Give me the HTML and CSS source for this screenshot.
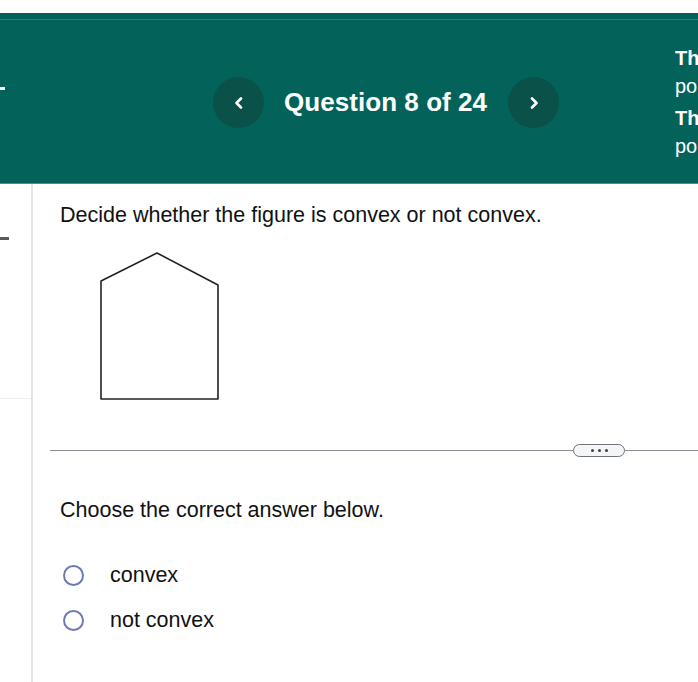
FILE: index.html
```html
<!DOCTYPE html>
<html>
<head>
<meta charset="utf-8">
<link rel="stylesheet" href="styles.css">
</head>
<body>
<div class="topstrip"></div>
<header class="header">
  <div class="hline"></div>
  <div class="hbody">
    <div class="hminus"></div>
    <nav class="nav">
      <button class="navbtn" aria-label="Previous">
        <svg width="10" height="12" viewBox="0 0 10 12"><polyline points="7,1.5 2.5,6 7,10.5" fill="none" stroke="#fff" stroke-width="2.6" stroke-linecap="round" stroke-linejoin="round"/></svg>
      </button>
      <h1 class="qtitle">Question 8 of 24</h1>
      <button class="navbtn" aria-label="Next">
        <svg width="10" height="12" viewBox="0 0 10 12"><polyline points="3,1.5 7.5,6 3,10.5" fill="none" stroke="#fff" stroke-width="2.6" stroke-linecap="round" stroke-linejoin="round"/></svg>
      </button>
    </nav>
    <div class="hinfo">
      <p><b>This question:</b><br>points possible</p>
      <p><b>This quiz:</b><br>points possible</p>
    </div>
  </div>
</header>
<div class="page">
  <aside class="sidecol">
    <div class="sminus"></div>
    <div class="sline"></div>
  </aside>
  <main class="main">
    <p class="qtext">Decide whether the figure is convex or not convex.</p>
    <svg class="figure" width="170" height="160" viewBox="0 0 170 160">
      <polygon points="41,36 97,8 158,40 158,154 41,154" fill="none" stroke="#222" stroke-width="1.6" stroke-linejoin="round"/>
    </svg>
    <div class="sep">
      <div class="sepline"></div>
      <div class="pill"><span></span><span></span><span></span></div>
      <div class="sepline short"></div>
    </div>
    <p class="choose">Choose the correct answer below.</p>
    <div class="opts">
      <label class="opt"><span class="radio"></span><span>convex</span></label>
      <label class="opt"><span class="radio"></span><span>not convex</span></label>
    </div>
  </main>
</div>
</body>
</html>
```
FILE: styles.css
```css
html, body {
  margin: 0;
  padding: 0;
  background: #fff;
}
body {
  font-family: "Liberation Sans", Arial, sans-serif;
  color: #111;
  width: 698px;
  height: 682px;
  overflow: hidden;
}
.topstrip {
  height: 13px;
  background: #fff;
}
.header {
  height: 171px;
  background: #03625a;
  display: flex;
  flex-direction: column;
  border-bottom: 1px solid #4f8f88;
  box-sizing: border-box;
}
.hline {
  height: 1px;
  margin-top: 6px;
  background: #2e7f76;
}
.hbody {
  flex: 1;
  display: flex;
  align-items: center;
}
.hminus {
  width: 5px;
  height: 3px;
  background: #f2f7f6;
  margin-top: -26px;
}
.nav {
  display: flex;
  align-items: center;
  margin-left: 208px;
  margin-top: 2px;
}
.navbtn {
  width: 51px;
  height: 51px;
  border-radius: 50%;
  border: none;
  background: #0a5149;
  display: flex;
  align-items: center;
  justify-content: center;
  padding: 0;
}
.qtitle {
  margin: 0 21px 0 20px;
  font-size: 26px;
  font-weight: bold;
  color: #fff;
  white-space: nowrap;
  letter-spacing: 0.05px;
}
.hinfo {
  margin-left: auto;
  width: 23px;
  overflow: hidden;
  white-space: nowrap;
  color: #fff;
  font-size: 20px;
  line-height: 28px;
}
.hinfo p {
  margin: 0;
}
.hinfo p + p {
  margin-top: 4px;
}
.page {
  display: flex;
  height: 498px;
}
.sidecol {
  width: 31px;
  border-right: 2px solid #e3e3e3;
  display: flex;
  flex-direction: column;
}
.sminus {
  width: 9px;
  height: 3px;
  background: #5a5a5a;
  margin-top: 53px;
}
.sline {
  height: 1px;
  background: #f0f0f0;
  margin-top: 158px;
}
.main {
  flex: 1;
  padding-left: 27px;
  display: flex;
  flex-direction: column;
  font-size: 21.5px;
  line-height: 25px;
}
.qtext {
  margin: 19px 0 0 0;
  white-space: nowrap;
}
.figure {
  display: block;
  margin-top: 17px;
}
.sep {
  display: flex;
  align-items: center;
  margin-left: -10px;
  margin-top: 39px;
  height: 13px;
}
.sepline {
  flex: 1;
  height: 1.5px;
  background: #8b8e94;
}
.sepline.short {
  flex: 0 0 73px;
}
.pill {
  width: 50px;
  height: 11px;
  border: 1.5px solid #6f7277;
  border-radius: 8px;
  background: #f4f5f7;
  display: flex;
  align-items: center;
  justify-content: center;
  gap: 4px;
}
.pill span {
  width: 3px;
  height: 3px;
  border-radius: 50%;
  background: #3d4045;
}
.choose {
  margin: 41px 0 0 0;
}
.opts {
  margin-top: 40px;
  display: flex;
  flex-direction: column;
  gap: 20px;
}
.opt {
  display: flex;
  align-items: center;
  gap: 26px;
  height: 25px;
}
.radio {
  width: 17px;
  height: 17px;
  border: 2px solid #6f78b6;
  border-radius: 50%;
  margin-left: 3px;
  flex-shrink: 0;
}
```
